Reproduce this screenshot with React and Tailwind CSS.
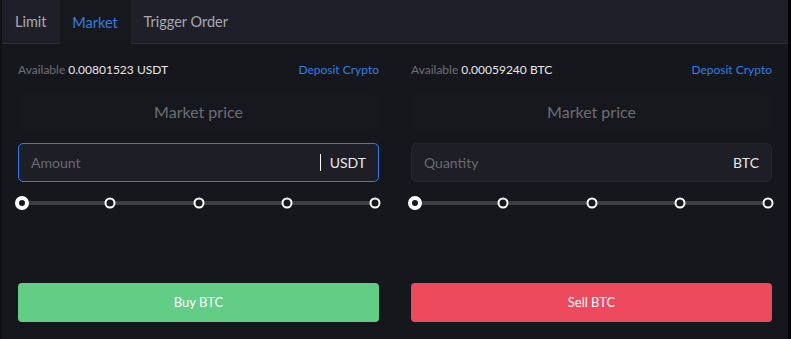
export default function App() {
  const Slider = () => (
    <div className="relative h-[14px] mt-[14px] mx-[4px]">
      <div className="absolute left-0 right-0 top-[5px] h-[4px] bg-[#3d3e43]" />
      {[0, 25, 50, 75, 100].map((p, i) => (
        <div
          key={p}
          className={`absolute top-1/2 -translate-x-1/2 -translate-y-1/2 rounded-full bg-[#17181d] border-white ${i === 0 ? 'w-[14px] h-[14px] border-[4px]' : 'w-[11px] h-[11px] border-2'}`}
          style={{ left: `${p}%` }}
        />
      ))}
    </div>
  );

  const Column = ({ balance, unit, placeholder, active, btn, btnClass }) => (
    <div className="flex-1 flex flex-col">
      <div className="flex items-center justify-between h-[16px] mt-[18px] text-[12px]">
        <div>
          <span className="text-[#6d6f76]">Available </span>
          <span className="text-[#e6e7ea]">{balance} {unit}</span>
        </div>
        <span className="text-[#2f7fe6]">Deposit Crypto</span>
      </div>
      <div className="mt-[16px] h-[36px] flex items-center justify-center rounded-[5px] bg-[#17181e] text-[16px] text-[#6c6e75]">
        Market price
      </div>
      <div
        className={`mt-[13px] h-[39px] rounded-[5px] bg-[#1e1f26] flex items-center px-[12px] border ${active ? 'border-[#2d7bec]' : 'border-[#24252c]'}`}
      >
        <span className="flex-1 text-[14px] text-[#686a71]">{placeholder}</span>
        {active && <span className="w-px h-[17px] bg-white mr-[9px]" />}
        <span className="text-[14px] text-[#e8e9ec]">{unit}</span>
      </div>
      <Slider />
      <button className={`mt-[73px] h-[39px] rounded-[4px] text-[13px] text-white ${btnClass}`}>{btn}</button>
    </div>
  );

  return (
    <div
      className="w-[791px] h-[339px] bg-[#0c0c0e] flex overflow-hidden"
      style={{ fontFamily: 'Lato, "Noto Sans", sans-serif' }}
    >
      <div className="w-[2px] bg-[#101013]" />
      <div className="flex-1 flex flex-col bg-[#16171c]">
        <div className="h-[44px] bg-[#1e1f28] border-b border-[#2a2b33] flex items-stretch text-[14.5px]">
          <div className="px-[13px] flex items-center text-[#a8aab0]">Limit</div>
          <div className="w-[71px] flex items-center justify-center bg-[#17181d] text-[#2f7fe6] -mb-px pt-[2px]">Market</div>
          <div className="px-[13px] flex items-center text-[#a8aab0]">Trigger Order</div>
        </div>
        <div className="flex-1 flex gap-[32px] px-[16px]">
          <Column
            balance="0.00801523"
            unit="USDT"
            placeholder="Amount"
            active
            btn="Buy BTC"
            btnClass="bg-[#62cd84]"
          />
          <Column
            balance="0.00059240"
            unit="BTC"
            placeholder="Quantity"
            btn="Sell BTC"
            btnClass="bg-[#ed4a5e]"
          />
        </div>
      </div>
      <div className="w-[3px] bg-[#050506]" />
    </div>
  );
}
